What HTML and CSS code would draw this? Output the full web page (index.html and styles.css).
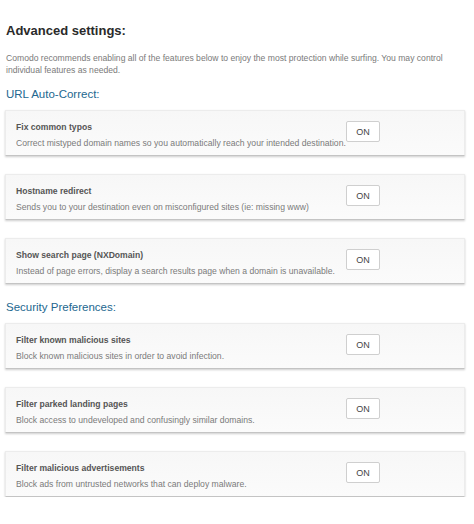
FILE: index.html
```html
<!DOCTYPE html>
<html>
<head>
<meta charset="utf-8">
<link rel="stylesheet" href="styles.css">
</head>
<body>
<div class="page">
  <h1 class="title">Advanced settings:</h1>
  <p class="intro">Comodo recommends enabling all of the features below to enjoy the most protection while surfing. You may control individual features as needed.</p>

  <h2 class="section">URL Auto-Correct:</h2>
  <div class="cards">
    <div class="card">
      <div class="text">
        <div class="name">Fix common typos</div>
        <div class="desc">Correct mistyped domain names so you automatically reach your intended destination.</div>
      </div>
      <button class="toggle">ON</button>
    </div>
    <div class="card">
      <div class="text">
        <div class="name">Hostname redirect</div>
        <div class="desc">Sends you to your destination even on misconfigured sites (ie: missing www)</div>
      </div>
      <button class="toggle">ON</button>
    </div>
    <div class="card">
      <div class="text">
        <div class="name">Show search page (NXDomain)</div>
        <div class="desc">Instead of page errors, display a search results page when a domain is unavailable.</div>
      </div>
      <button class="toggle">ON</button>
    </div>
  </div>

  <h2 class="section sec2">Security Preferences:</h2>
  <div class="cards">
    <div class="card">
      <div class="text">
        <div class="name">Filter known malicious sites</div>
        <div class="desc">Block known malicious sites in order to avoid infection.</div>
      </div>
      <button class="toggle">ON</button>
    </div>
    <div class="card">
      <div class="text">
        <div class="name">Filter parked landing pages</div>
        <div class="desc">Block access to undeveloped and confusingly similar domains.</div>
      </div>
      <button class="toggle">ON</button>
    </div>
    <div class="card">
      <div class="text">
        <div class="name">Filter malicious advertisements</div>
        <div class="desc">Block ads from untrusted networks that can deploy malware.</div>
      </div>
      <button class="toggle">ON</button>
    </div>
  </div>
</div>
</body>
</html>
```

FILE: styles.css
```css
html, body {
  margin: 0;
  padding: 0;
  background: #ffffff;
}
body {
  font-family: "Liberation Sans", Arial, sans-serif;
}
.page {
  padding: 0 9px 0 5px;
}
.title {
  margin: 0;
  padding-top: 23px;
  padding-left: 1px;
  font-size: 13px;
  line-height: 16px;
  font-weight: bold;
  color: #2a2a2a;
}
.intro {
  margin: 13px 0 0 1px;
  font-size: 8.6px;
  line-height: 12px;
  color: #7a7a7a;
  width: 455px;
}
.section {
  margin: 11px 0 0 1px;
  font-size: 11.5px;
  line-height: 14px;
  font-weight: normal;
  color: #23678f;
}
.sec2 {
  margin-top: 16px;
}
.cards {
  margin-top: 9px;
  display: flex;
  flex-direction: column;
  gap: 18px;
}
.card {
  display: grid;
  grid-template-columns: 330px auto;
  align-items: center;
  height: 46px;
  box-sizing: border-box;
  padding: 3px 0 0 10px;
  border: 1px solid #ececec;
  border-bottom-color: #c4c4c4;
  background: linear-gradient(#f7f7f7, #fbfbfb);
  box-shadow: 0 1px 2px rgba(0, 0, 0, 0.2);
}
.name {
  font-size: 8.6px;
  font-weight: bold;
  color: #555555;
  line-height: 12px;
}
.desc {
  margin-top: 4px;
  font-size: 8.65px;
  color: #7a7a7a;
  line-height: 12px;
  white-space: nowrap;
}
.toggle {
  justify-self: start;
  margin-top: -6px;
  width: 34px;
  height: 21px;
  padding: 0;
  background: #ffffff;
  border: 1px solid #cfcfcf;
  border-radius: 2px;
  font-family: "Liberation Sans", Arial, sans-serif;
  font-size: 9px;
  color: #444444;
}
```
